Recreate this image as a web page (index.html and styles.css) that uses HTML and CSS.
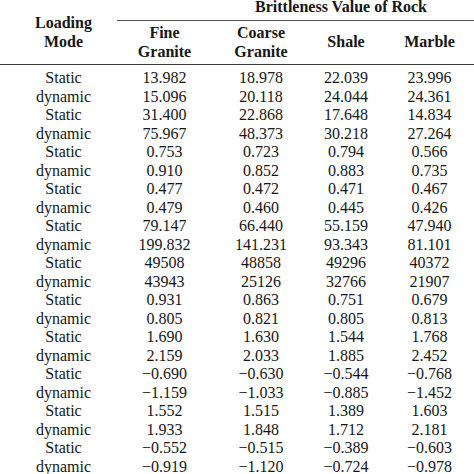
FILE: index.html
```html
<!DOCTYPE html>
<html>
<head>
<meta charset="utf-8">
<link rel="stylesheet" href="styles.css">
</head>
<body>
<table class="brit">
  <colgroup>
    <col class="c-mode">
    <col class="c-fine">
    <col class="c-coarse">
    <col class="c-shale">
    <col class="c-marble">
    <col class="c-more">
  </colgroup>
  <thead>
    <tr>
      <th rowspan="2" class="mode">Loading<br>Mode</th>
      <th colspan="5" class="group">Brittleness Value of Rock</th>
    </tr>
    <tr class="rocks">
      <th>Fine<br>Granite</th>
      <th>Coarse<br>Granite</th>
      <th>Shale</th>
      <th>Marble</th>
      <th></th>
    </tr>
  </thead>
  <tbody>
    <tr><td>Static</td><td>13.982</td><td>18.978</td><td>22.039</td><td>23.996</td><td></td></tr>
    <tr><td>dynamic</td><td>15.096</td><td>20.118</td><td>24.044</td><td>24.361</td><td></td></tr>
    <tr><td>Static</td><td>31.400</td><td>22.868</td><td>17.648</td><td>14.834</td><td></td></tr>
    <tr><td>dynamic</td><td>75.967</td><td>48.373</td><td>30.218</td><td>27.264</td><td></td></tr>
    <tr><td>Static</td><td>0.753</td><td>0.723</td><td>0.794</td><td>0.566</td><td></td></tr>
    <tr><td>dynamic</td><td>0.910</td><td>0.852</td><td>0.883</td><td>0.735</td><td></td></tr>
    <tr><td>Static</td><td>0.477</td><td>0.472</td><td>0.471</td><td>0.467</td><td></td></tr>
    <tr><td>dynamic</td><td>0.479</td><td>0.460</td><td>0.445</td><td>0.426</td><td></td></tr>
    <tr><td>Static</td><td>79.147</td><td>66.440</td><td>55.159</td><td>47.940</td><td></td></tr>
    <tr><td>dynamic</td><td>199.832</td><td>141.231</td><td>93.343</td><td>81.101</td><td></td></tr>
    <tr><td>Static</td><td>49508</td><td>48858</td><td>49296</td><td>40372</td><td></td></tr>
    <tr><td>dynamic</td><td>43943</td><td>25126</td><td>32766</td><td>21907</td><td></td></tr>
    <tr><td>Static</td><td>0.931</td><td>0.863</td><td>0.751</td><td>0.679</td><td></td></tr>
    <tr><td>dynamic</td><td>0.805</td><td>0.821</td><td>0.805</td><td>0.813</td><td></td></tr>
    <tr><td>Static</td><td>1.690</td><td>1.630</td><td>1.544</td><td>1.768</td><td></td></tr>
    <tr><td>dynamic</td><td>2.159</td><td>2.033</td><td>1.885</td><td>2.452</td><td></td></tr>
    <tr><td>Static</td><td>−0.690</td><td>−0.630</td><td>−0.544</td><td>−0.768</td><td></td></tr>
    <tr><td>dynamic</td><td>−1.159</td><td>−1.033</td><td>−0.885</td><td>−1.452</td><td></td></tr>
    <tr><td>Static</td><td>1.552</td><td>1.515</td><td>1.389</td><td>1.603</td><td></td></tr>
    <tr><td>dynamic</td><td>1.933</td><td>1.848</td><td>1.712</td><td>2.181</td><td></td></tr>
    <tr><td>Static</td><td>−0.552</td><td>−0.515</td><td>−0.389</td><td>−0.603</td><td></td></tr>
    <tr><td>dynamic</td><td>−0.919</td><td>−1.120</td><td>−0.724</td><td>−0.978</td><td></td></tr>
  </tbody>
</table>
</body>
</html>
```

FILE: styles.css
```css
html, body {
  margin: 0;
  padding: 0;
  background: #ffffff;
  overflow: hidden;
}

body {
  font-family: "Liberation Serif", "Times New Roman", serif;
  font-size: 16px;
  color: #161616;
}

.brit {
  border-collapse: collapse;
  table-layout: fixed;
  width: 565px;
}

.c-mode { width: 117px; }
.c-fine { width: 95px; }
.c-coarse { width: 98px; }
.c-shale { width: 72px; }
.c-marble { width: 95px; }
.c-more { width: 88px; }

.brit th,
.brit td {
  padding: 0;
  text-align: center;
  line-height: 18.5px;
  white-space: nowrap;
  vertical-align: middle;
}

.brit th {
  font-weight: bold;
}

.brit .mode {
  padding-left: 10px;
  padding-top: 1px;
  border-bottom: 1.5px solid #3a3a3a;
}

.brit .group {
  line-height: 14px;
  padding-bottom: 6px;
  border-bottom: 1px solid #555555;
  vertical-align: bottom;
}

.brit .rocks th {
  padding: 3px 0;
  border-bottom: 1.5px solid #3a3a3a;
}

.brit tbody td:first-child {
  padding-left: 10px;
}

.brit tbody tr:first-child td {
  padding-top: 4px;
}
```
